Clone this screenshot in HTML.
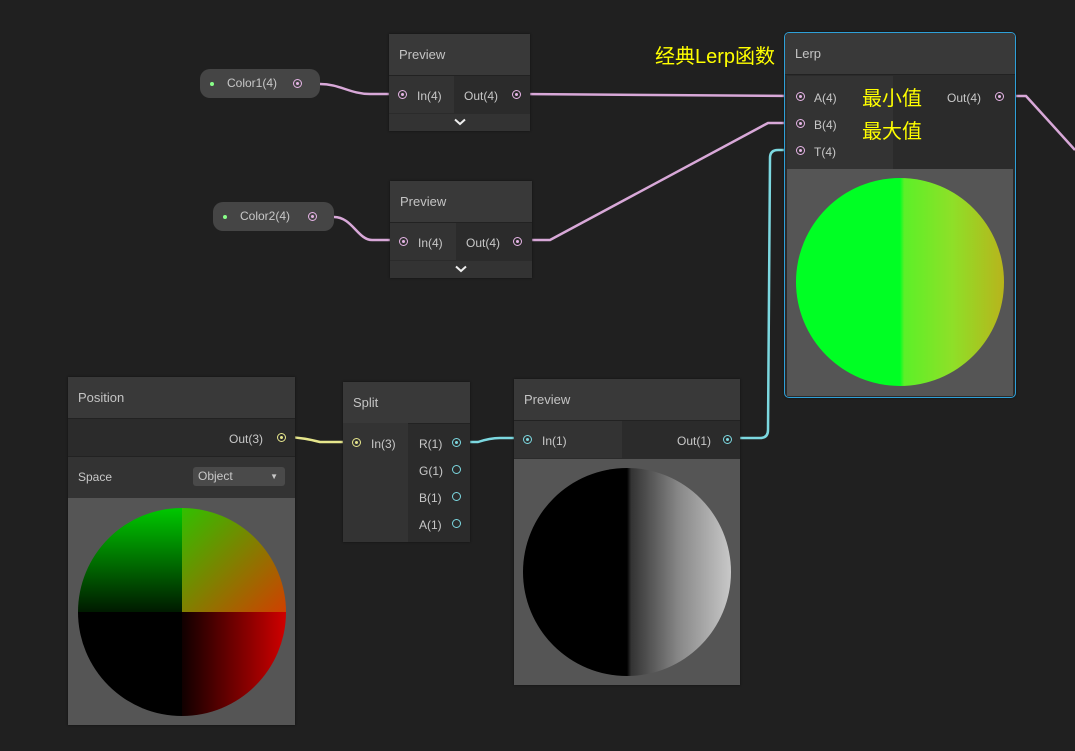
<!DOCTYPE html><html><head><meta charset="utf-8"><style>
body{margin:0;width:1075px;height:751px;background:#202020;overflow:hidden;position:relative;font-family:"Liberation Sans","Noto Sans CJK SC",sans-serif;color:#c8c8c8;font-size:12px}
.n{position:absolute;background:#2b2b2b;box-shadow:0 0 2px #111}
.h{position:absolute;left:0;right:0;top:0;height:41px;background:#393939;border-bottom:1px solid #222;font-size:13px;line-height:41px;padding-left:10px;color:#c4c4c4}
.a{position:absolute}
.p{position:absolute;width:9px;height:9px;border-radius:50%;border:1.5px solid #e6b4e6;box-sizing:border-box;margin:-1px}
.p::after{content:"";position:absolute;left:1.5px;top:1.5px;width:3px;height:3px;border-radius:50%;background:#e6b4e6}
.y{border-color:#e6e68c}.y::after{background:#e6e68c}
.c{border-color:#7cd8e0}.c::after{background:#7cd8e0}
.e::after{display:none}
.pill{position:absolute;background:#454545;border-radius:10px;height:29px;line-height:29px}
.lab{position:absolute;color:#ffff00;font-size:20px}
.chev{position:absolute;left:50%;top:4px;margin-left:-6px}
</style></head><body>
<svg class="a" style="left:0;top:0" width="1075" height="751">
<g fill="none" stroke-width="2.5">
<path d="M320 84 C340 84 350 94 370 94 L400 94" stroke="#d8a8d8"/>
<path d="M334 217 C352 217 358 240 372 240 L402 240" stroke="#d8a8d8"/>
<path d="M520 94 L800 96" stroke="#d8a8d8"/>
<path d="M522 240 L550 240 L768 123 L800 123" stroke="#d8a8d8"/>
<path d="M1002 96 L1026 96 L1075 150" stroke="#d8a8d8"/>
<path d="M284 437 C300 437 312 440 320 442 L357 442" stroke="#e6e68c"/>
<path d="M457 442 L478 442 Q490 438 500 438 L527 438" stroke="#7cd8e0"/>
<path d="M727 438 L760 438 Q768 438 768 430 L770 158 Q770 150 778 150 L800 150" stroke="#7cd8e0"/>
</g></svg>

<div class="pill" style="left:200px;top:69px;width:120px"><span class="a" style="left:10px;top:13px;width:4px;height:4px;border-radius:50%;background:#8f8"></span><span class="a" style="left:27px">Color1(4)</span><span class="p" style="left:94px;top:11px"></span></div>
<div class="pill" style="left:213px;top:202px;width:121px"><span class="a" style="left:10px;top:13px;width:4px;height:4px;border-radius:50%;background:#8f8"></span><span class="a" style="left:27px">Color2(4)</span><span class="p" style="left:96px;top:11px"></span></div>

<div class="n" style="left:389px;top:34px;width:141px;height:97px"><div class="h">Preview</div>
<div class="a" style="left:0;top:42px;width:65px;height:37px;background:#333"></div>
<span class="p" style="left:10px;top:57px"></span><span class="a" style="left:28px;top:55px">In(4)</span>
<span class="a" style="left:75px;top:55px">Out(4)</span><span class="p" style="left:124px;top:57px"></span>
<div class="a" style="left:0;top:80px;width:141px;height:17px;background:#333"><svg class="chev" width="12" height="8"><path d="M1 1.5 L6 6 L11 1.5" stroke="#eee" stroke-width="2" fill="none"/></svg></div></div>

<div class="n" style="left:390px;top:181px;width:142px;height:97px"><div class="h">Preview</div>
<div class="a" style="left:0;top:42px;width:66px;height:37px;background:#333"></div>
<span class="p" style="left:10px;top:57px"></span><span class="a" style="left:28px;top:55px">In(4)</span>
<span class="a" style="left:76px;top:55px">Out(4)</span><span class="p" style="left:124px;top:57px"></span>
<div class="a" style="left:0;top:80px;width:142px;height:17px;background:#333"><svg class="chev" width="12" height="8"><path d="M1 1.5 L6 6 L11 1.5" stroke="#eee" stroke-width="2" fill="none"/></svg></div></div>

<div class="n" style="left:784px;top:32px;width:230px;height:364px;border:1px solid #2ea0d8;border-radius:5px;overflow:hidden"><div class="h">Lerp</div>
<div class="a" style="left:2px;top:43px;width:106px;height:93px;background:#333"></div>
<span class="p" style="left:12px;top:60px"></span><span class="a" style="left:29px;top:58px">A(4)</span>
<span class="p" style="left:12px;top:87px"></span><span class="a" style="left:29px;top:85px">B(4)</span>
<span class="p" style="left:12px;top:114px"></span><span class="a" style="left:29px;top:112px">T(4)</span>
<span class="a" style="left:162px;top:58px">Out(4)</span><span class="p" style="left:211px;top:60px"></span>
<div class="a" style="left:2px;top:136px;width:226px;height:227px;background:#555">
<div class="a" style="left:9px;top:9px;width:208px;height:208px;border-radius:50%;background:linear-gradient(90deg,#00ff24 0,#00ff24 50%,#5cf028 52%,#8ee028 75%,#b8b41c 100%)"></div></div></div>

<div class="lab" style="left:655px;top:40px">经典Lerp函数</div>
<div class="lab" style="left:862px;top:82px">最小值</div>
<div class="lab" style="left:862px;top:115px">最大值</div>

<div class="n" style="left:68px;top:377px;width:227px;height:348px"><div class="h">Position</div>
<span class="a" style="left:161px;top:55px">Out(3)</span><span class="p y" style="left:210px;top:57px"></span>
<div class="a" style="left:0;top:79px;width:227px;height:41px;background:#333;border-top:1px solid #222;border-bottom:1px solid #222"></div>
<span class="a" style="left:10px;top:93px">Space</span>
<div class="a" style="left:125px;top:90px;width:92px;height:19px;background:#4a4a4a;border-radius:3px;line-height:19px"><span style="padding-left:5px">Object</span><span class="a" style="right:7px;top:0;font-size:8px">▼</span></div>
<div class="a" style="left:0;top:121px;width:227px;height:227px;background:#555">
<svg class="a" style="left:10px;top:10px" width="208" height="208"><defs>
<linearGradient id="tg" x1="0" x2="0" y1="0" y2="1"><stop offset="0" stop-color="#00c800"/><stop offset="1" stop-color="#001a00"/></linearGradient>
<linearGradient id="tr" x1="0" x2="1" y1="0" y2="1"><stop offset="0" stop-color="#30c000"/><stop offset="1" stop-color="#d04000"/></linearGradient>
<linearGradient id="br" x1="0" x2="1"><stop offset="0" stop-color="#100000"/><stop offset="1" stop-color="#d00000"/></linearGradient>
<clipPath id="cc"><circle cx="104" cy="104" r="104"/></clipPath></defs>
<g clip-path="url(#cc)"><rect width="104" height="104" fill="url(#tg)"/><rect x="104" width="104" height="104" fill="url(#tr)"/><rect y="104" width="104" height="104" fill="#000"/><rect x="104" y="104" width="104" height="104" fill="url(#br)"/></g></svg></div></div>

<div class="n" style="left:343px;top:382px;width:127px;height:160px"><div class="h">Split</div>
<div class="a" style="left:0;top:41px;width:65px;height:119px;background:#333"></div>
<span class="p y" style="left:10px;top:57px"></span><span class="a" style="left:28px;top:55px">In(3)</span>
<span class="a" style="left:76px;top:55px">R(1)</span><span class="p c" style="left:110px;top:57px"></span>
<span class="a" style="left:76px;top:82px">G(1)</span><span class="p c e" style="left:110px;top:84px"></span>
<span class="a" style="left:76px;top:109px">B(1)</span><span class="p c e" style="left:110px;top:111px"></span>
<span class="a" style="left:76px;top:136px">A(1)</span><span class="p c e" style="left:110px;top:138px"></span></div>

<div class="n" style="left:514px;top:379px;width:226px;height:306px"><div class="h">Preview</div>
<div class="a" style="left:0;top:42px;width:108px;height:37px;background:#333"></div>
<span class="p c" style="left:10px;top:57px"></span><span class="a" style="left:28px;top:55px">In(1)</span>
<span class="a" style="left:163px;top:55px">Out(1)</span><span class="p c" style="left:210px;top:57px"></span>
<div class="a" style="left:0;top:80px;width:226px;height:226px;background:#555">
<div class="a" style="left:9px;top:9px;width:208px;height:208px;border-radius:50%;background:linear-gradient(90deg,#000 0,#000 50%,#333 52%,#888 75%,#c8c8c8 100%)"></div></div></div>
</body></html>
